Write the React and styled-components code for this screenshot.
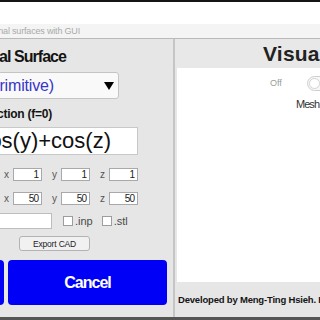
import React from "react";
import styled, { createGlobalStyle } from "styled-components";

const GlobalStyle = createGlobalStyle`
  html, body { margin: 0; padding: 0; width: 320px; height: 320px; overflow: hidden; background: #fff; }
  body { font-family: "Liberation Sans", Arial, sans-serif; letter-spacing: -0.06em; }
  #root { width: 320px; height: 320px; }
  * { box-sizing: border-box; }
`;

const Page = styled.div`
  width: 320px;
  height: 320px;
  display: flex;
  flex-direction: column;
  overflow: hidden;
`;

const TopBar = styled.div`
  flex: none;
  height: 2px;
  background: #151515;
`;

const WhiteBand = styled.div`
  flex: none;
  height: 22px;
  background: #fff;
`;

const TitleBar = styled.div`
  flex: none;
  height: 15px;
  background: #f4f4f4;
  border-bottom: 1px solid #b9b9b9;
  display: flex;
  align-items: center;
  font-size: 9px;
  letter-spacing: -0.02em;
  color: #a9a9a9;
`;

const EndAligned = styled.div`
  flex: none;
  width: ${(p) => p.$w}px;
  display: flex;
  justify-content: flex-end;
  white-space: nowrap;
`;

const Main = styled.div`
  flex: 1;
  min-height: 0;
  display: flex;
`;

const LeftPanel = styled.div`
  flex: none;
  width: 175px;
  background: #e6e6e6;
  border-right: 2px solid #c5c5c5;
  display: flex;
  flex-direction: column;
  overflow: hidden;
`;

const Heading = styled(EndAligned)`
  margin-top: 9px;
  height: 18px;
  line-height: 18px;
  font-size: 16px;
  font-weight: bold;
  color: #141414;
`;

const Select = styled.div`
  margin-top: 6px;
  margin-left: -20px;
  width: 139px;
  height: 27px;
  background: #f9f9f9;
  border: 1px solid #c4c4c4;
  border-radius: 3px;
  display: flex;
  align-items: center;
  font-size: 16px;
  letter-spacing: -0.01em;
  color: #3636c8;
`;

const Arrow = styled.svg`
  margin-left: auto;
  margin-right: 4px;
  flex: none;
`;

const Label = styled(EndAligned)`
  margin-top: 8px;
  height: 14px;
  line-height: 14px;
  font-size: 12px;
  font-weight: bold;
  letter-spacing: -0.02em;
  color: #141414;
`;

const FuncInput = styled.div`
  margin-top: 6px;
  margin-left: -20px;
  width: 158px;
  height: 28px;
  background: #fff;
  border: 1px solid #c8c8c8;
  display: flex;
  align-items: center;
  font-size: 22px;
  letter-spacing: 0;
  color: #111;
`;

const CoordRow = styled.div`
  margin-top: ${(p) => p.$mt}px;
  height: 13px;
  padding-left: 4px;
  display: flex;
  font-size: 10px;
  color: #555;
`;

const CoordGroup = styled.div`
  flex: none;
  width: 48px;
  display: flex;
  align-items: center;
`;

const CoordLabel = styled.span`
  width: 9px;
  flex: none;
`;

const CoordInput = styled.div`
  width: 29px;
  height: 13px;
  border: 1px solid #a9a9a9;
  background: #fff;
  text-align: right;
  padding-right: 3px;
  line-height: 11px;
  font-size: 10px;
  color: #222;
`;

const ExportRow = styled.div`
  margin-top: 8px;
  height: 16px;
  display: flex;
  align-items: center;
`;

const NameInput = styled.div`
  flex: none;
  margin-left: -20px;
  width: 72px;
  height: 16px;
  background: #fff;
  border: 1px solid #bdbdbd;
`;

const CheckItem = styled.label`
  display: flex;
  align-items: center;
  gap: 2px;
  margin-left: 11px;
  font-size: 11px;
  letter-spacing: 0;
  color: #4a4a4a;
  & + & { margin-left: 9px; }
`;

const CheckBox = styled.span`
  width: 10px;
  height: 10px;
  background: #fff;
  border: 1px solid #9d9d9d;
`;

const ExportButton = styled.div`
  margin-top: 7px;
  margin-left: 19px;
  width: 71px;
  height: 15px;
  background: #f1f1f1;
  border: 1px solid #b3b3b3;
  border-radius: 3px;
  display: flex;
  align-items: center;
  justify-content: center;
  font-size: 8.5px;
  color: #222;
  letter-spacing: -0.02em;
`;

const ButtonRow = styled.div`
  margin-top: 9px;
  margin-left: -152px;
  height: 45px;
  display: flex;
  gap: 4px;
`;

const BigButton = styled.div`
  flex: none;
  width: ${(p) => p.$w}px;
  background: #0000f6;
  border-radius: 4px;
  display: flex;
  align-items: center;
  justify-content: center;
  color: #fff;
  font-size: 16px;
  font-weight: bold;
`;

const RightPanel = styled.div`
  flex: 1;
  min-width: 0;
  background: #e6e6e6;
  display: flex;
  flex-direction: column;
  overflow: hidden;
`;

const Header = styled.div`
  flex: none;
  height: 29px;
  background: #e8e8e8;
  padding-left: 88px;
  display: flex;
  align-items: center;
  font-size: 21px;
  font-weight: bold;
  color: #222;
  white-space: nowrap;
  letter-spacing: 0.01em;
`;

const Canvas = styled.div`
  flex: none;
  margin-left: 2px;
  height: 214px;
  background: #fff;
  display: flex;
  flex-direction: column;
`;

const ToggleRow = styled.div`
  margin-top: 8px;
  height: 14px;
  padding-left: 93px;
  display: flex;
  align-items: center;
  white-space: nowrap;
`;

const OffText = styled.span`
  font-size: 9px;
  letter-spacing: 0;
  color: #9c9c9c;
`;

const Toggle = styled.div`
  flex: none;
  margin-left: 25px;
  width: 30px;
  height: 15px;
  border: 1px solid #cfcfcf;
  border-radius: 8px;
  background: #f7f7f7;
  display: flex;
  align-items: center;
  padding-left: 1px;
`;

const Knob = styled.span`
  width: 11px;
  height: 11px;
  border-radius: 50%;
  background: #fff;
  border: 1px solid #d4d4d4;
`;

const MeshLabel = styled.div`
  margin-top: 7px;
  padding-left: 119px;
  height: 14px;
  line-height: 14px;
  font-size: 11px;
  color: #333;
  white-space: nowrap;
`;

const Footer = styled.div`
  flex: 1;
  display: flex;
  align-items: center;
  padding-left: 3px;
  font-size: 9.5px;
  font-weight: bold;
  color: #141414;
  white-space: nowrap;
  letter-spacing: -0.02em;
`;

const BottomBar = styled.div`
  flex: none;
  height: 3px;
  background: #555;
`;

const coords = [
  { mt: 13, vals: ["1", "1", "1"] },
  { mt: 11, vals: ["50", "50", "50"] },
];

export default function App() {
  return (
    <>
      <GlobalStyle />
      <Page>
        <TopBar />
        <WhiteBand />
        <TitleBar>
          <EndAligned $w={80}>Implicit functional surfaces with GUI</EndAligned>
        </TitleBar>
        <Main>
          <LeftPanel>
            <Heading $w={66}>Implicit Functional Surface</Heading>
            <Select>
              <EndAligned $w={73}>Sphere (Primitive)</EndAligned>
              <Arrow width="10" height="8" viewBox="0 0 10 8">
                <polygon points="0,0 10,0 5,8" fill="#000" />
              </Arrow>
            </Select>
            <Label $w={52}>Implicit Function (f=0)</Label>
            <FuncInput>
              <EndAligned $w={130}>cos(x)+cos(y)+cos(z)</EndAligned>
            </FuncInput>
            {coords.map((row, i) => (
              <CoordRow key={i} $mt={row.mt}>
                {["x", "y", "z"].map((axis, j) => (
                  <CoordGroup key={axis}>
                    <CoordLabel>{axis}</CoordLabel>
                    <CoordInput>{row.vals[j]}</CoordInput>
                  </CoordGroup>
                ))}
              </CoordRow>
            ))}
            <ExportRow>
              <NameInput />
              <CheckItem>
                <CheckBox />
                .inp
              </CheckItem>
              <CheckItem>
                <CheckBox />
                .stl
              </CheckItem>
            </ExportRow>
            <ExportButton>Export CAD</ExportButton>
            <ButtonRow>
              <BigButton $w={156}>Apply</BigButton>
              <BigButton $w={159}>Cancel</BigButton>
            </ButtonRow>
          </LeftPanel>
          <RightPanel>
            <Header>Visualization</Header>
            <Canvas>
              <ToggleRow>
                <OffText>Off</OffText>
                <Toggle>
                  <Knob />
                </Toggle>
              </ToggleRow>
              <MeshLabel>Mesh</MeshLabel>
            </Canvas>
            <Footer>Developed by Meng-Ting Hsieh. Last updated 2020</Footer>
          </RightPanel>
        </Main>
        <BottomBar />
      </Page>
    </>
  );
}
